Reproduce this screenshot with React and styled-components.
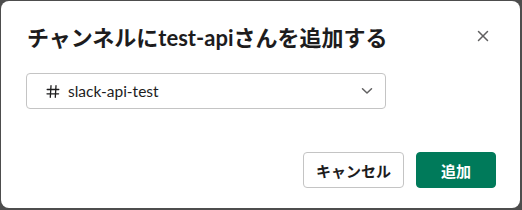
import React from 'react';
import styled, { createGlobalStyle } from 'styled-components';

const GlobalStyle = createGlobalStyle`
  html, body {
    margin: 0;
    padding: 0;
    background: #4d4d4d;
  }
  body {
    font-family: Lato, "Noto Sans CJK JP", sans-serif;
    color: #1d1c1d;
  }
`

const Dialog = styled.div`
  box-sizing: border-box;
  margin: 1px 2px 0 1px;
  width: 519px;
  height: 207px;
  background: #fff;
  border-radius: 8px;
  padding: 0 24px 20px 25px;
  display: flex;
  flex-direction: column;
`

const Header = styled.div`
  height: 70px;
  display: flex;
  align-items: center;
  justify-content: space-between;
`

const Title = styled.h1`
  margin: 0 0 0 1px;
  font-size: 22px;
  font-weight: 700;
  color: #1d1c1d;
`

const CloseButton = styled.button`
  border: none;
  background: none;
  padding: 0;
  width: 26px;
  height: 26px;
  display: flex;
  align-items: center;
  justify-content: center;
  color: #616061;
`

const Select = styled.div`
  box-sizing: border-box;
  margin-top: 2px;
  width: 360px;
  height: 36px;
  border: 1px solid #c4c4c4;
  border-radius: 4px;
  display: flex;
  align-items: center;
  padding: 0 12px 0 19px;
  font-size: 15.5px;
  color: #1d1c1d;
`

const SelectLabel = styled.span`
  flex: 1;
  margin-left: 8px;
`

const Footer = styled.div`
  margin-top: auto;
  display: flex;
  justify-content: flex-end;
  gap: 12px;
`

const Button = styled.button`
  box-sizing: border-box;
  height: 36px;
  padding: 0 ${p => (p.primary ? '24px' : '12px')};
  min-width: 80px;
  border-radius: 4px;
  font-family: Lato, "Noto Sans CJK JP", sans-serif;
  font-size: 15px;
  font-weight: 700;
  border: 1px solid ${p => (p.primary ? '#007a5a' : '#c4c4c4')};
  background: ${p => (p.primary ? '#007a5a' : '#fff')};
  color: ${p => (p.primary ? '#fff' : '#1d1c1d')};
`

const HashIcon = () => (
  <svg width="14" height="15" viewBox="0 0 14 14" fill="none" stroke="#1d1c1d" strokeWidth="1.3" strokeLinecap="round">
    <path d="M5 1.2 L4.3 12.8" />
    <path d="M10 1.2 L9.3 12.8" />
    <path d="M1.2 5 H12.8" />
    <path d="M1 9.3 H12.6" />
  </svg>
)

const Chevron = () => (
  <svg width="12" height="8" viewBox="0 0 12 8" fill="none" stroke="#616061" strokeWidth="1.5" strokeLinecap="round" strokeLinejoin="round">
    <path d="M1.5 1.8 L6 6 L10.5 1.8" />
  </svg>
)

const CloseIcon = () => (
  <svg width="12" height="12" viewBox="0 0 12 12" fill="none" stroke="#616061" strokeWidth="1.5" strokeLinecap="round">
    <path d="M1.5 1.5 L10.5 10.5" />
    <path d="M10.5 1.5 L1.5 10.5" />
  </svg>
)

const App = () => {
  return (
    <>
      <GlobalStyle />
      <Dialog>
        <Header>
          <Title>チャンネルにtest-apiさんを追加する</Title>
          <CloseButton><CloseIcon /></CloseButton>
        </Header>
        <Select>
          <HashIcon />
          <SelectLabel>slack-api-test</SelectLabel>
          <Chevron />
        </Select>
        <Footer>
          <Button>キャンセル</Button>
          <Button primary>追加</Button>
        </Footer>
      </Dialog>
    </>
  )
}

export default App;
